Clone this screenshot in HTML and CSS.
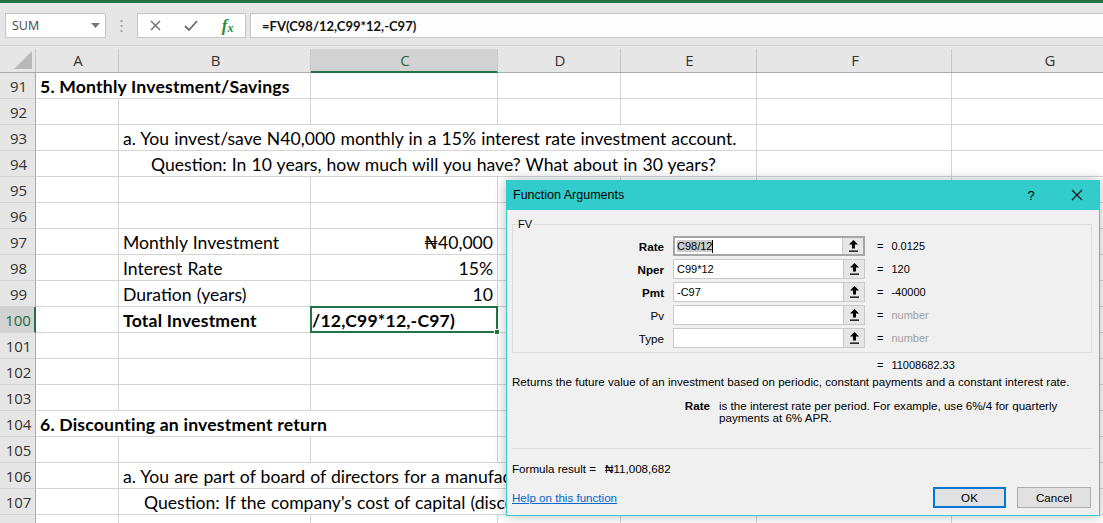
FILE: index.html
```html
<!DOCTYPE html>
<html>
<head>
<meta charset="utf-8">
<link rel="stylesheet" href="styles.css">
</head>
<body>
<div class="edge"></div>
<div class="fbar">
  <div class="namebox"><span>SUM</span><svg width="9" height="5" viewBox="0 0 9 5"><polygon points="0,0 9,0 4.5,5" fill="#777"/></svg></div>
  <div class="dots"><svg width="3" height="12" viewBox="0 0 3 12"><rect x="0.5" y="0" width="2" height="2" fill="#a6a6a6"/><rect x="0.5" y="5" width="2" height="2" fill="#a6a6a6"/><rect x="0.5" y="10" width="2" height="2" fill="#a6a6a6"/></svg></div>
  <div class="fbtns">
    <span class="fb"><svg width="11" height="11" viewBox="0 0 11 11"><path d="M1 1 L10 10 M10 1 L1 10" stroke="#6b6b6b" stroke-width="1.4" fill="none"/></svg></span>
    <span class="fb"><svg width="14" height="11" viewBox="0 0 14 11"><path d="M1 6 L5 10 L13 1" stroke="#6b6b6b" stroke-width="1.8" fill="none"/></svg></span>
    <span class="fb fx"><i>f</i><i class="sub">x</i></span>
  </div>
  <div class="finput">=FV(C98/12,C99*12,-C97)</div>
</div>

<div class="colhead">
  <div class="corner"><svg width="18" height="18" viewBox="0 0 18 18"><polygon points="18,0 18,18 0,18" fill="#b9b9b9"/></svg></div>
  <div class="ch">A</div>
  <div class="ch">B</div>
  <div class="ch sel">C</div>
  <div class="ch">D</div>
  <div class="ch">E</div>
  <div class="ch">F</div>
  <div class="ch">G</div>
</div>

<div class="sheet">
  <div class="row"><div class="rh">91</div><div class="c b span-ab">5. Monthly Investment/Savings</div><div class="c"></div><div class="c"></div><div class="c"></div><div class="c"></div><div class="c"></div></div>
  <div class="row"><div class="rh">92</div><div class="c"></div><div class="c"></div><div class="c"></div><div class="c"></div><div class="c"></div><div class="c"></div><div class="c"></div></div>
  <div class="row"><div class="rh">93</div><div class="c"></div><div class="c span-be">a. You invest/save N40,000 monthly in a 15% interest rate investment account.</div><div class="c"></div><div class="c"></div></div>
  <div class="row"><div class="rh">94</div><div class="c"></div><div class="c span-be ind1">Question: In 10 years, how much will you have? What about in 30 years?</div><div class="c"></div><div class="c"></div></div>
  <div class="row"><div class="rh">95</div><div class="c"></div><div class="c"></div><div class="c"></div><div class="c"></div><div class="c"></div><div class="c"></div><div class="c"></div></div>
  <div class="row"><div class="rh">96</div><div class="c"></div><div class="c"></div><div class="c"></div><div class="c"></div><div class="c"></div><div class="c"></div><div class="c"></div></div>
  <div class="row"><div class="rh">97</div><div class="c"></div><div class="c">Monthly Investment</div><div class="c r">₦40,000</div><div class="c"></div><div class="c"></div><div class="c"></div><div class="c"></div></div>
  <div class="row"><div class="rh">98</div><div class="c"></div><div class="c">Interest Rate</div><div class="c r">15%</div><div class="c"></div><div class="c"></div><div class="c"></div><div class="c"></div></div>
  <div class="row"><div class="rh">99</div><div class="c"></div><div class="c">Duration (years)</div><div class="c r">10</div><div class="c"></div><div class="c"></div><div class="c"></div><div class="c"></div></div>
  <div class="row"><div class="rh sel">100</div><div class="c"></div><div class="c b">Total Investment</div><div class="c b active"><span class="edit">/12,C99*12,-C97)</span><span class="handle"></span></div><div class="c"></div><div class="c"></div><div class="c"></div><div class="c"></div></div>
  <div class="row"><div class="rh">101</div><div class="c"></div><div class="c"></div><div class="c"></div><div class="c"></div><div class="c"></div><div class="c"></div><div class="c"></div></div>
  <div class="row"><div class="rh">102</div><div class="c"></div><div class="c"></div><div class="c"></div><div class="c"></div><div class="c"></div><div class="c"></div><div class="c"></div></div>
  <div class="row"><div class="rh">103</div><div class="c"></div><div class="c"></div><div class="c"></div><div class="c"></div><div class="c"></div><div class="c"></div><div class="c"></div></div>
  <div class="row"><div class="rh">104</div><div class="c b span-ac">6. Discounting an investment return</div><div class="c"></div><div class="c"></div><div class="c"></div><div class="c"></div></div>
  <div class="row"><div class="rh">105</div><div class="c"></div><div class="c"></div><div class="c"></div><div class="c"></div><div class="c"></div><div class="c"></div><div class="c"></div></div>
  <div class="row"><div class="rh">106</div><div class="c"></div><div class="c span-bd clip">a. You are part of board of directors for a manufacturing company</div><div class="c"></div><div class="c"></div><div class="c"></div></div>
  <div class="row"><div class="rh">107</div><div class="c"></div><div class="c span-bd clip ind2">Question: If the company's cost of capital (discount rate) is 12%</div><div class="c"></div><div class="c"></div><div class="c"></div></div>
  <div class="row"><div class="rh"></div><div class="c"></div><div class="c"></div><div class="c"></div><div class="c"></div><div class="c"></div><div class="c"></div><div class="c"></div></div>
</div>

<div class="dialog">
  <div class="dhead">
    <span class="dtitle">Function Arguments</span>
    <span class="dhelp">?</span>
    <span class="dclose"><svg width="12" height="12" viewBox="0 0 12 12"><path d="M1 1 L11 11 M11 1 L1 11" stroke="#111" stroke-width="1.1" fill="none"/></svg></span>
  </div>
  <div class="dbody">
    <fieldset class="group">
      <legend>FV</legend>
      <div class="arg"><span class="alabel req">Rate</span><span class="abox focus"><span class="atext"><span class="selected">C98/12</span><span class="caret"></span></span><span class="upbtn"><svg width="9" height="12" viewBox="0 0 9 12"><polygon points="4.5,0 9,4.5 6,4.5 6,8.5 3,8.5 3,4.5 0,4.5" fill="#000"/><rect x="0" y="10.5" width="9" height="1.3" fill="#000"/></svg></span></span><span class="aeq">=</span><span class="aval">0.0125</span></div>
      <div class="arg"><span class="alabel req">Nper</span><span class="abox"><span class="atext">C99*12</span><span class="upbtn"><svg width="9" height="12" viewBox="0 0 9 12"><polygon points="4.5,0 9,4.5 6,4.5 6,8.5 3,8.5 3,4.5 0,4.5" fill="#000"/><rect x="0" y="10.5" width="9" height="1.3" fill="#000"/></svg></span></span><span class="aeq">=</span><span class="aval">120</span></div>
      <div class="arg"><span class="alabel req">Pmt</span><span class="abox"><span class="atext">-C97</span><span class="upbtn"><svg width="9" height="12" viewBox="0 0 9 12"><polygon points="4.5,0 9,4.5 6,4.5 6,8.5 3,8.5 3,4.5 0,4.5" fill="#000"/><rect x="0" y="10.5" width="9" height="1.3" fill="#000"/></svg></span></span><span class="aeq">=</span><span class="aval">-40000</span></div>
      <div class="arg"><span class="alabel">Pv</span><span class="abox"><span class="atext"></span><span class="upbtn"><svg width="9" height="12" viewBox="0 0 9 12"><polygon points="4.5,0 9,4.5 6,4.5 6,8.5 3,8.5 3,4.5 0,4.5" fill="#000"/><rect x="0" y="10.5" width="9" height="1.3" fill="#000"/></svg></span></span><span class="aeq">=</span><span class="aval muted">number</span></div>
      <div class="arg"><span class="alabel">Type</span><span class="abox"><span class="atext"></span><span class="upbtn"><svg width="9" height="12" viewBox="0 0 9 12"><polygon points="4.5,0 9,4.5 6,4.5 6,8.5 3,8.5 3,4.5 0,4.5" fill="#000"/><rect x="0" y="10.5" width="9" height="1.3" fill="#000"/></svg></span></span><span class="aeq">=</span><span class="aval muted">number</span></div>
    </fieldset>
    <div class="total"><span class="aeq2">=</span><span>11008682.33</span></div>
    <div class="fdesc">Returns the future value of an investment based on periodic, constant payments and a constant interest rate.</div>
    <div class="adesc"><span class="adname">Rate</span><span class="adtext">is the interest rate per period. For example, use 6%/4 for quarterly payments at 6% APR.</span></div>
    <div class="sep"></div>
    <div class="fres"><span>Formula result =</span><span class="fresv">₦11,008,682</span></div>
    <div class="dfoot">
      <span class="help">Help on this function</span>
      <span class="btn ok">OK</span>
      <span class="btn cancel">Cancel</span>
    </div>
  </div>
</div>
</body>
</html>
```
FILE: styles.css
```css
* { box-sizing: border-box; }
body {
  margin: 0;
  width: 1103px;
  height: 523px;
  overflow: hidden;
  background: #fff;
  position: relative;
  font-family: "Liberation Sans", Arial, sans-serif;
}
.edge { height: 3px; background: #217346; }
.fbar {
  height: 43px;
  background: #e6e6e6;
  border-bottom: 1px solid #d0d0d0;
  display: flex;
  align-items: flex-start;
  padding-top: 10px;
}
.namebox {
  margin-left: 5px;
  width: 101px;
  height: 25px;
  background: #fff;
  border: 1px solid #c6c6c6;
  display: flex;
  align-items: center;
  justify-content: space-between;
  padding: 0 5px 0 6px;
  font-family: "Open Sans", sans-serif;
  font-size: 12.5px;
  color: #444;
}
.dots { width: 31px; height: 25px; display: flex; align-items: center; justify-content: center; }
.fbtns {
  width: 109px;
  height: 25px;
  background: #fff;
  border: 1px solid #c6c6c6;
  display: flex;
}
.fb { width: 36px; display: flex; align-items: center; justify-content: center; }
.fx { font-family: "Liberation Serif", serif; color: #2b8a3c; font-size: 17px; font-weight: bold; padding-left: 1px; }
.fx .sub { font-size: 12px; margin-top: 5px; margin-left: 0; }
.finput {
  margin-left: 4px;
  flex: 1;
  height: 25px;
  background: #fdfdfd;
  border: 1px solid #c6c6c6;
  border-right: none;
  padding-left: 11px;
  display: flex;
  align-items: center;
  font-family: Lato, sans-serif;
  font-weight: bold;
  font-size: 13px;
  color: #111;
}
.colhead, .row {
  display: grid;
  grid-template-columns: 36px 83px 192px 187px 123px 136px 195px 195px;
  width: 1147px;
}
.colhead {
  height: 27px;
  background: #e6e6e6;
  border-bottom: 1px solid #ababab;
}
.corner { display: flex; align-items: flex-end; justify-content: flex-end; padding: 0 3px 3px 0; border-right: 1px solid #c8c8c8; margin-top: 3px; }
.ch {
  margin-top: 3px;
  border-right: 1px solid #c8c8c8;
  display: flex;
  align-items: center;
  justify-content: center;
  font-family: "Open Sans", sans-serif;
  font-size: 15px;
  color: #333;
  padding: 0 0 1px 2px;
}
.ch.sel { background: #d2d2d2; border-bottom: 2px solid #217346; color: #1d6b40; margin-bottom: -1px; }
.row { height: 26px; }
.rh {
  background: #e6e6e6;
  border-right: 1px solid #ababab;
  border-bottom: 1px solid #d4d4d4;
  display: flex;
  align-items: center;
  justify-content: center;
  padding-left: 2px;
  font-family: "Open Sans", sans-serif;
  font-size: 15px;
  color: #333;
}
.rh.sel { background: #d2d2d2; border-right: 2px solid #217346; color: #1d6b40; }
.c {
  border-right: 1px solid #d4d4d4;
  border-bottom: 1px solid #d4d4d4;
  font-family: Lato, "DejaVu Sans", sans-serif;
  font-size: 17.6px;
  word-spacing: 0.6px;
  color: #000;
  white-space: nowrap;
  display: flex;
  align-items: center;
  padding: 1px 4px 0;
}
.c.b { font-weight: bold; letter-spacing: 0.2px; word-spacing: 0; }
.c.r { justify-content: flex-end; }
.clip { overflow: hidden; }
.span-ab { grid-column: 2 / 4; }
.span-ac { grid-column: 2 / 5; }
.span-be { grid-column: 3 / 7; }
.span-bd { grid-column: 3 / 6; }
.ind1 { padding-left: 32px; }
.ind2 { padding-left: 25px; }
.active { position: relative; padding-left: 0; }
.active .edit { margin-left: 1px; overflow: hidden; }
.active::after {
  content: "";
  position: absolute;
  left: -1px; top: -1px; right: -1px; bottom: -1px;
  border: 2px solid #217346;
}
.handle {
  position: absolute;
  right: -3px;
  bottom: -3px;
  width: 6px;
  height: 6px;
  background: #217346;
  border: 1px solid #fff;
  z-index: 2;
}
.dialog {
  position: absolute;
  left: 506px;
  top: 180px;
  width: 594px;
  height: 336px;
  background: #f0f0f0;
  border: 1px solid #33cccc;
  border-top: none;
  box-shadow: 0 0 12px rgba(0,0,0,0.28);
  font-family: "Liberation Sans", Arial, sans-serif;
  font-size: 11.6px;
  color: #000;
}
.dhead {
  height: 30px;
  background: #33cccc;
  display: flex;
  align-items: center;
  padding-left: 7px;
  margin: 0 -1px;
}
.dtitle { flex: 1; font-size: 12.5px; }
.dhelp { width: 46px; text-align: center; font-size: 13px; }
.dclose { width: 46px; display: flex; justify-content: center; }
.dbody { padding: 0 7px 0 5px; }
.group {
  margin: 8px 0 0 0;
  padding: 5px 0 4px 0;
  border: 1px solid #dcdcdc;
  min-width: 0;
}
.group legend { margin-left: 4px; padding: 0 1px; font-size: 11px; line-height: 13px; }
.arg { display: flex; align-items: center; height: 20px; margin-bottom: 3px; }
.arg:last-child { margin-bottom: 0; }
.alabel { width: 151px; text-align: right; }
.alabel.req { font-weight: bold; }
.abox {
  margin-left: 9px;
  width: 192px;
  height: 20px;
  display: flex;
  background: #fff;
  border: 1px solid #c9c9c9;
}
.abox.focus { border: 2px solid #a6a6a6; }
.atext { flex: 1; display: flex; align-items: center; padding-left: 3px; font-size: 11px; }
.abox.focus .atext { padding-left: 2px; }
.selected { background: #cccccc; }
.caret { width: 1px; height: 13px; background: #000; }
.upbtn { width: 21px; background: #e6e6e6; border-left: 1px solid #c9c9c9; display: flex; align-items: center; justify-content: center; }
.aeq { margin-left: 12px; font-size: 11px; }
.aval { margin-left: 8px; font-size: 11px; }
.muted { color: #a0a0a0; }
.total { margin-top: 6px; padding-left: 365px; line-height: 13px; font-size: 11px; }
.aeq2 { margin-right: 8px; }
.fdesc { margin-top: 3px; line-height: 13px; }
.adesc { margin-top: 12px; display: flex; line-height: 12px; }
.adname { width: 198px; text-align: right; font-weight: bold; }
.adtext { margin-left: 9px; width: 345px; }
.sep { margin-top: 24px; border-top: 1px solid #dcdcdc; }
.fres { margin-top: 13px; line-height: 13px; }
.fresv { margin-left: 9px; }
.dfoot { margin-top: 12px; display: flex; align-items: center; height: 21px; }
.help { flex: 1; color: #0066cc; text-decoration: underline; }
.btn { height: 21px; display: flex; align-items: center; justify-content: center; background: #e1e1e1; }
.ok { width: 73px; border: 2px solid #0078d7; }
.cancel { width: 74px; border: 1px solid #adadad; margin-left: 11px; margin-right: 1px; }
```
